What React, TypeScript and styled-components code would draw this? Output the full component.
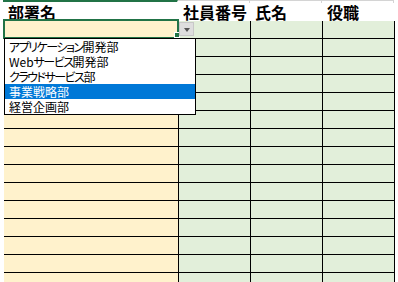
import React from 'react'
import styled, { createGlobalStyle } from 'styled-components'

const GlobalStyle = createGlobalStyle`
  body {
    margin: 0;
    background: #ffffff;
    overflow: hidden;
    font-family: "Noto Sans CJK JP", "Noto Sans", sans-serif;
  }
`

const COLS = '175px 72px 72px 72px'

const Sheet = styled.div`
  padding-left: 4px;
  width: 398px;
  height: 282px;
  box-sizing: border-box;
  overflow: hidden;
`

const TopStrip = styled.div`
  display: grid;
  grid-template-columns: ${COLS};
  height: 3px;
  margin-left: -1px;
`

const StripCell = styled.div<{ $active?: boolean }>`
  box-sizing: border-box;
  border-top: ${(p) => (p.$active ? '2px solid #217346' : '1px solid #d4d4d4')};
  border-right: 1px solid #d4d4d4;
  ${(p) => (p.$active ? 'border-right-color: transparent;' : '')}
`

const HeaderRow = styled.div`
  display: grid;
  grid-template-columns: ${COLS};
  height: 18px;
  background: #ffffff;
`

const HeaderCell = styled.div`
  font-weight: 700;
  font-size: 16px;
  line-height: 18px;
  padding-left: 4px;
  color: #000;
  white-space: nowrap;
`

const Row = styled.div`
  display: grid;
  grid-template-columns: ${COLS};
  height: 18px;
`

const Cell = styled.div<{ $tone: 'dept' | 'info' }>`
  box-sizing: border-box;
  background: ${(p) => (p.$tone === 'dept' ? '#fff2cc' : '#e2efda')};
  border-bottom: 1px solid #000;
  border-right: 1px solid #000;
  position: relative;
`

const Selection = styled.div`
  position: absolute;
  left: -1px;
  top: -2px;
  right: -1px;
  bottom: -1px;
  border: 2px solid #217346;
  pointer-events: none;
`

const FillHandle = styled.div`
  position: absolute;
  right: -3px;
  bottom: -1px;
  width: 4px;
  height: 4px;
  background: #217346;
  border: 1px solid #fff;
`

const DropButton = styled.div`
  position: absolute;
  left: calc(100% + 1px);
  top: 1px;
  width: 15px;
  height: 14px;
  box-sizing: border-box;
  background: #dedede;
  border: 1px solid #c8c8c8;
  display: flex;
  align-items: center;
  justify-content: center;
  z-index: 3;
`

const Arrow = styled.div`
  width: 0;
  height: 0;
  border-left: 3.5px solid transparent;
  border-right: 3.5px solid transparent;
  border-top: 4px solid #555;
  margin-top: 1px;
`

const DropList = styled.ul`
  position: absolute;
  left: 0;
  top: 17px;
  width: 192px;
  margin: 0;
  padding: 0;
  list-style: none;
  box-sizing: border-box;
  background: #fff;
  border: 1px solid #000;
  z-index: 4;
`

const DropItem = styled.li<{ $selected?: boolean }>`
  height: 15px;
  line-height: 15px;
  padding-left: 4px;
  font-size: 12px;
  font-feature-settings: "palt";
  white-space: nowrap;
  overflow: hidden;
  color: ${(p) => (p.$selected ? '#fff' : '#000')};
  background: ${(p) => (p.$selected ? '#0078d7' : 'transparent')};
`

// katakana is set narrower in the original UI font
const Kana = styled.span`
  letter-spacing: -1.5px;
`

const headers = ['部署名', '社員番号', '氏名', '役職']
const departments = [
  'アプリケーション開発部',
  'Webサービス開発部',
  'クラウドサービス部',
  '事業戦略部',
  '経営企画部',
]

const renderLabel = (text: string) =>
  text.split(/([\u30a0-\u30ff]+)/).map((part, i) =>
    /[\u30a0-\u30ff]/.test(part) ? <Kana key={i}>{part}</Kana> : part
  )

export default function App() {
  const rows = Array.from({ length: 15 }, (_, i) => i)

  return (
    <>
      <GlobalStyle />
      <Sheet>
        <TopStrip>
          <StripCell $active />
          <StripCell />
          <StripCell />
          <StripCell />
        </TopStrip>
        <HeaderRow>
          {headers.map((h) => (
            <HeaderCell key={h}>{h}</HeaderCell>
          ))}
        </HeaderRow>
        {rows.map((i) => (
          <Row key={i}>
            <Cell $tone="dept" style={i === 0 ? { zIndex: 5 } : undefined}>
              {i === 0 && (
                <>
                  <Selection>
                    <FillHandle />
                  </Selection>
                  <DropButton>
                    <Arrow />
                  </DropButton>
                  <DropList>
                    {departments.map((d) => (
                      <DropItem key={d} $selected={d === '事業戦略部'}>
                        {renderLabel(d)}
                      </DropItem>
                    ))}
                  </DropList>
                </>
              )}
            </Cell>
            <Cell $tone="info" />
            <Cell $tone="info" />
            <Cell $tone="info" />
          </Row>
        ))}
      </Sheet>
    </>
  )
}
